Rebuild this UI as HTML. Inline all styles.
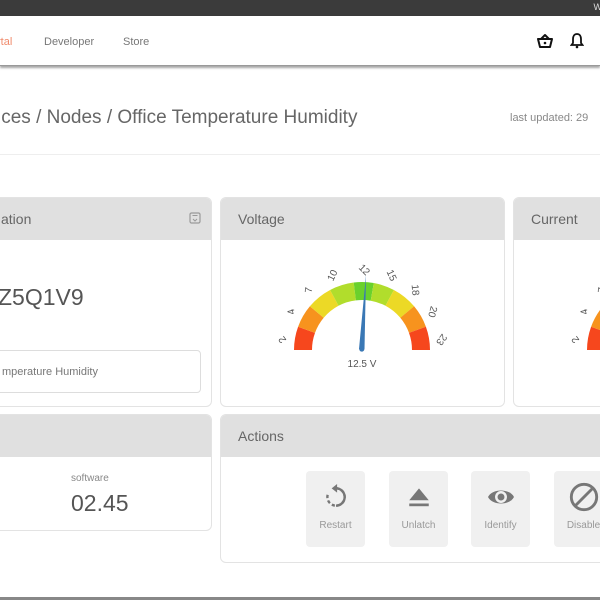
<!DOCTYPE html>
<html><head><style>
*{box-sizing:border-box;margin:0;padding:0}
body{width:600px;height:600px;overflow:hidden;background:#fff;font-family:"Liberation Sans",sans-serif;color:#555;position:relative}
.top{position:absolute;left:0;top:0;width:600px;height:16px;background:#3b3b3b}
.top span{position:absolute;right:-2px;top:2px;color:#ddd;font-size:9px}
.nav{position:absolute;left:0;top:16px;width:600px;height:50px;background:#fff;box-shadow:0 2px 2px rgba(0,0,0,.35);border-bottom:1px solid #999}
.nav a{position:absolute;top:20px;font-size:11px;color:#777}
.crumb{position:absolute;left:-3px;top:107px;font-size:19px;color:#666}
.upd{position:absolute;left:510px;top:112px;font-size:11px;color:#888;white-space:nowrap}
.hr{position:absolute;left:0;top:154px;width:600px;height:1px;background:#eee}
.card{position:absolute;border:1px solid #e3e3e3;border-radius:6px;background:#fff;overflow:hidden}
.card .h{height:42px;background:#e0e0e0;font-size:14px;color:#666;padding:13px 17px}
.btn{position:absolute;top:471px;width:59px;height:76px;background:#f0f0f0;border-radius:4px;text-align:center;font-size:10px;color:#999}
.btn svg{display:block;margin:13px auto 10px}
</style></head><body>
<div class="top"><span>W</span></div>
<div class="nav">
<a style="left:-3px;color:#f08a6b">rtal</a>
<a style="left:44px">Developer</a>
<a style="left:123px">Store</a>
<svg style="position:absolute;left:536px;top:17px" width="18" height="16" viewBox="0 0 18 16"><path d="M2 6h14l-2 8H4z M5 6l4-4 4 4" fill="none" stroke="#111" stroke-width="2" stroke-linejoin="round"/><circle cx="9" cy="10" r="1.3" fill="#111"/></svg>
<svg style="position:absolute;left:570px;top:16px" width="14" height="17" viewBox="0 0 14 17"><path d="M7 2c-3 0-4 2.5-4 5v4l-1.5 2h11L11 11V7c0-2.5-1-5-4-5z" fill="none" stroke="#111" stroke-width="1.8"/><circle cx="7" cy="15" r="1.3" fill="#111"/></svg>
</div>
<div class="crumb">ices / Nodes / Office Temperature Humidity</div>
<div class="upd">last updated: 29</div>
<div class="hr"></div>

<div class="card" style="left:-10px;top:197px;width:222px;height:210px">
<div class="h" style="padding-left:10px">ation
<svg style="position:absolute;right:10px;top:14px" width="12" height="12" viewBox="0 0 12 12"><rect x="1" y="1" width="10" height="10" rx="1.5" fill="none" stroke="#999" stroke-width="1.2"/><path d="M3.5 3.5h5M4 7l2 2 2-2" fill="none" stroke="#999"/></svg></div>
<div style="position:absolute;left:7px;top:86px;font-size:23px;color:#555">Z5Q1V9</div>
<div style="position:absolute;left:0;top:152px;width:210px;height:43px;border:1px solid #ddd;border-radius:4px;font-size:11px;color:#777;padding:15px 0 0 10px">mperature Humidity</div>
</div>

<div class="card" style="left:220px;top:197px;width:285px;height:210px"><div class="h">Voltage</div></div>
<div class="card" style="left:513px;top:197px;width:120px;height:210px"><div class="h">Current</div></div>

<div class="card" style="left:-10px;top:414px;width:222px;height:117px"><div class="h"></div>
<div style="position:absolute;left:80px;top:58px;font-size:10px;color:#888">software</div>
<div style="position:absolute;left:80px;top:75px;font-size:23px;color:#555">02.45</div>
</div>

<div class="card" style="left:220px;top:414px;width:400px;height:149px"><div class="h">Actions</div></div>

<svg style="position:absolute;left:0;top:0" width="600" height="600">
<defs><g id="g">
<path d="M-68 0A68 68 0 0 1 -63.9 -23.3L-47 -17.1A50 50 0 0 0 -50 0Z" fill="#f6471d"/>
<path d="M-63.9 -23.3A68 68 0 0 1 -52.1 -43.7L-38.3 -32.2A50 50 0 0 0 -47 -17.1Z" fill="#f7931e"/>
<path d="M-52.1 -43.7A68 68 0 0 1 -31.9 -60L-23.5 -44.2A50 50 0 0 0 -38.3 -32.2Z" fill="#ecd926"/>
<path d="M-31.9 -60A68 68 0 0 1 -8.3 -67.5L-6.1 -49.6A50 50 0 0 0 -23.5 -44.2Z" fill="#b1dd2c"/>
<path d="M-8.3 -67.5A68 68 0 0 1 11.8 -67L8.7 -49.3A50 50 0 0 0 -6.1 -49.6Z" fill="#6ad12c"/>
<path d="M11.8 -67A68 68 0 0 1 31.9 -60L23.5 -44.2A50 50 0 0 0 8.7 -49.3Z" fill="#b1dd2c"/>
<path d="M31.9 -60A68 68 0 0 1 52.1 -43.7L38.3 -32.2A50 50 0 0 0 23.5 -44.2Z" fill="#ecd926"/>
<path d="M52.1 -43.7A68 68 0 0 1 63.9 -23.3L47 -17.1A50 50 0 0 0 38.3 -32.2Z" fill="#f7931e"/>
<path d="M63.9 -23.3A68 68 0 0 1 68 0L50 0A50 50 0 0 0 47 -17.1Z" fill="#f6471d"/>
<g font-size="10" fill="#555" text-anchor="middle" font-family="Liberation Sans,sans-serif">
<text transform="rotate(-81) translate(0,-78) rotate(-45)">2</text>
<text transform="rotate(-60) translate(0,-78) rotate(-45)">4</text>
<text transform="rotate(-40) translate(0,-78) rotate(-45)">7</text>
<text transform="rotate(-20) translate(0,-78) rotate(-45)">10</text>
<text transform="rotate(0) translate(0,-78) rotate(45)">12</text>
<text transform="rotate(20) translate(0,-78) rotate(45)">15</text>
<text transform="rotate(40) translate(0,-78) rotate(45)">18</text>
<text transform="rotate(60) translate(0,-78) rotate(45)">20</text>
<text transform="rotate(81) translate(0,-78) rotate(45)">23</text>
</g></g></defs>
<use href="#g" x="362" y="350"/>
<polygon points="366,275 364.5,349 359,349" fill="#3a78b5"/><circle cx="361.8" cy="349" r="2.6" fill="#3a78b5"/>
<text x="362" y="367" font-size="10" fill="#555" text-anchor="middle" font-family="Liberation Sans,sans-serif">12.5 V</text>
<use href="#g" x="655" y="350"/>
</svg>

<div class="btn" style="left:306px"><svg width="26" height="26" viewBox="0 0 24 24"><path d="M12 4a8 8 0 1 1-7.5 5.3" fill="none" stroke="#777" stroke-width="2.2" stroke-dasharray="3 2.2"/><path d="M12 4a8 8 0 0 1 0 16" fill="none" stroke="#777" stroke-width="2.2"/><path d="M13 0v8l-5-4z" fill="#777"/></svg>Restart</div>
<div class="btn" style="left:389px"><svg width="26" height="26" viewBox="0 0 24 24"><path d="M12 4l9 11H3z" fill="#777"/><rect x="3" y="18" width="18" height="2.5" fill="#777"/></svg>Unlatch</div>
<div class="btn" style="left:471px"><svg width="32" height="26" viewBox="0 0 26 24"><path d="M1 12C5 4 21 4 25 12C21 20 5 20 1 12Z" fill="#777"/><circle cx="13" cy="12" r="5.5" fill="#f0f0f0"/><circle cx="13" cy="12" r="3.2" fill="#777"/></svg>Identify</div>
<div class="btn" style="left:554px"><svg width="30" height="30" viewBox="0 0 26 26" style="margin-top:11px;margin-bottom:8px"><circle cx="13" cy="13" r="11" fill="none" stroke="#777" stroke-width="2.5"/><path d="M5 21L21 5" stroke="#777" stroke-width="2.5"/></svg>Disable</div>
<div style="position:absolute;left:0;top:597px;width:600px;height:3px;background:#888"></div>
</body></html>
